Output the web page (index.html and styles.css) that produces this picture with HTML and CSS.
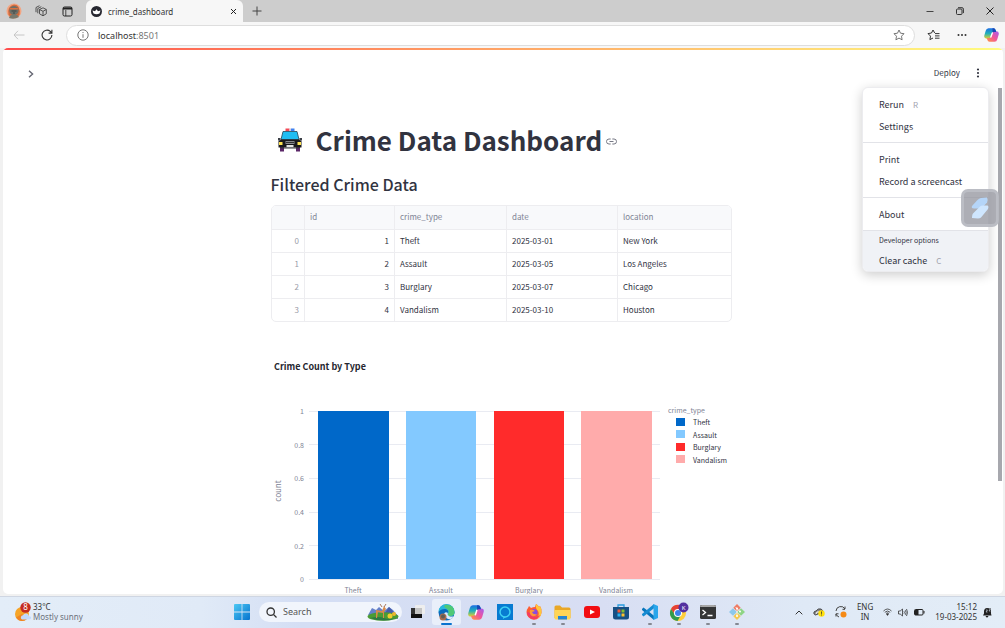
FILE: index.html
```html
<!DOCTYPE html>
<html lang="en">
<head>
    <meta charset="UTF-8">
    <title>crime_dashboard</title>
    <link rel="stylesheet" href="styles.css">
</head>
<body>
<div class="tabs">
    <button type="button" class="icon" aria-label="Profile">
      <svg width="16" height="16" viewBox="0 0 16 16"><circle cx="8" cy="8" r="7.5" fill="#f3a582"/><path d="M2.5 12Q1 3 8 1.5Q15 2 13.5 12L11 14H5Z" fill="#cf6a3d"/><circle cx="8" cy="7.5" r="4.6" fill="#6b6f68"/><path d="M4 5h8v1.500H4z" fill="#d9713e"/><path d="M3 15Q4 11 8 11.500Q12 11 13 14Q8 17 3 15" fill="#77786c"/><path d="M5.500 8h5M7 10h2" stroke="#3c4947"/></svg>
    </button>
    <button type="button" class="icon" aria-label="Workspaces">
      <svg width="12" height="12" viewBox="0 0 12 12" fill="none" stroke="#444" stroke-width=".9"><path d="M4.500 4.500L8 2.800L11.300 4.500V8.800L8 10.800L4.500 8.800ZM4.500 4.500L8 6.300L11.300 4.500M8 6.300V10.800M2.800 8.300V3.500L6.300 1.700M1 7.200V2.500L4.500 .7"/></svg>
    </button>
    <button type="button" class="icon" aria-label="Tab actions">
      <svg width="11" height="11" viewBox="0 0 11 11" fill="none" stroke="#222"><rect x="1" y="1" width="9" height="9" rx="1.500"/><path d="M1 2.500h9" stroke-width="2"/><path d="M3.800 4v6" stroke-width=".8"/></svg>
    </button>
    <div class="tab">
      <svg width="11" height="11" viewBox="0 0 11 11"><circle cx="5.500" cy="5.500" r="5.500" fill="#262730"/><path d="M1.500 4.500L4 5.200L5.500 3.300L7 5.200L9.500 4.500L8.500 7.500Q5.500 8.800 2.500 7.500Z" fill="#fff"/></svg>
      <span>crime_dashboard</span>
      <button type="button" aria-label="Close tab">
        <svg width="7" height="7" viewBox="0 0 7 7" stroke="#222" stroke-width="1"><path d="M1 1l5 5M6 1l-5 5"/></svg>
      </button>
    </div>
    <button type="button" class="icon" aria-label="New tab">
      <svg width="10" height="10" viewBox="0 0 10 10" stroke="#444"><path d="M5 .5v9M.5 5h9"/></svg>
    </button>
    <div class="window">
      <button type="button" aria-label="Minimize"><svg width="8" height="8" viewBox="0 0 8 8" stroke="#444"><path d="M.5 4.500h7"/></svg></button>
      <button type="button" aria-label="Restore"><svg width="8" height="8" viewBox="0 0 8 8" fill="none" stroke="#333"><rect x=".5" y="2" width="5.500" height="5.500" rx="1"/><path d="M2 .7h4q1.400 0 1.400 1.400v4"/></svg></button>
      <button type="button" aria-label="Close"><svg width="8" height="8" viewBox="0 0 8 8" stroke="#222"><path d="M.5.5l7 7M7.500.5l-7 7"/></svg></button>
    </div>
</div>

<div class="toolbar">
    <button type="button" class="icon" aria-label="Back">
      <svg width="12" height="10" viewBox="0 0 12 10" fill="none" stroke="#c6c6c6"><path d="M5 .8L1 5l4 4.200M1 5h10.500"/></svg>
    </button>
    <button type="button" class="icon" aria-label="Refresh">
      <svg width="12" height="12" viewBox="0 0 12 12" fill="none" stroke="#333" stroke-width="1.100"><path d="M10.900 6A4.900 4.900 0 1 1 9.300 2.400L10.800 4M10.900.8V4.100H7.600"/></svg>
    </button>
    <div class="address">
      <svg width="12" height="12" viewBox="0 0 12 12" fill="none" stroke="#666" stroke-width=".9"><circle cx="6" cy="6" r="5.200"/><path d="M6 5.200v3.600M6 3v1.100"/></svg>
      <a href="#">localhost<span>:8501</span></a>
      <button type="button" aria-label="Add to favorites">
        <svg width="12" height="12" viewBox="0 0 12 12" fill="none" stroke="#666" stroke-width=".9"><path d="M6 1l1.500 3.200 3.500.5-2.500 2.500.6 3.600L6 9.100l-3.100 1.700.6-3.600L1 4.700l3.500-.5z"/></svg>
      </button>
    </div>
    <button type="button" class="icon wide" aria-label="Favorites">
      <svg width="13" height="12" viewBox="0 0 13 12" fill="none" stroke="#333"><path d="M7.700 4L6 1 4.500 4 1 4.600l2.500 2.500-.6 3.500L6 9M8 4.600h4.500M8 6.900h4.500M8 9.200h4.500"/></svg>
    </button>
    <button type="button" class="icon wide" aria-label="More">
      <svg width="10" height="4" viewBox="0 0 10 4" fill="#333"><circle cx="1.500" cy="2" r="1"/><circle cx="5" cy="2" r="1"/><circle cx="8.500" cy="2" r="1"/></svg>
    </button>
    <button type="button" class="icon" aria-label="Copilot">
      <svg width="15" height="14" viewBox="0 0 15 14">
        <defs>
          <linearGradient id="cool" x1="0" y1="0" x2="0" y2="1"><stop offset="0" stop-color="#1b6fe4"/><stop offset=".5" stop-color="#22b0b8"/><stop offset="1" stop-color="#e3d12c"/></linearGradient>
          <linearGradient id="warm" x1="1" y1="0" x2="0" y2="1"><stop offset="0" stop-color="#a45cf0"/><stop offset=".5" stop-color="#f0549a"/><stop offset="1" stop-color="#ff983f"/></linearGradient>
        </defs>
        <g id="copilot"><path d="M4.500.3h5q1.700 0 2.200 2l.5 1.700H10Q8.600 4 8 5.500L6.700 9.300Q6.200 10.700 4.500 10.700H2.800Q-.4 10.700.3 7.500L1.700 2.800Q2.300.3 4.500.3" fill="url(#cool)"/><path d="M10.500 13.700h-5q-1.700 0-2.200-2L2.800 10H5q1.400 0 2-1.500l1.300-3.800q.5-1.400 2.200-1.400h1.700q3.200 0 2.500 3.200l-1.400 4.700q-.6 2.500-2.800 2.500" fill="url(#warm)"/><path d="M8.500.3h1q1.700 0 2.200 2l.5 1.700H10Q9 4 8.500 5Z" fill="#1747b5"/><path d="M8.300 5L6.900 9" stroke="#fff" stroke-width="1.400" stroke-linecap="round"/></g>
      </svg>
    </button>
</div>

<div class="page">
    <header>
      <button type="button" class="expand" aria-label="Open sidebar">
        <svg width="6" height="8" viewBox="0 0 6 8" fill="none" stroke="#666874" stroke-width="1.400"><path d="M1 .7L4.600 4 1 7.300"/></svg>
      </button>
      <button type="button" class="deploy">Deploy</button>
      <button type="button" class="dots" aria-label="Main menu">
        <svg width="4" height="10" viewBox="0 0 4 10" fill="#31333f"><circle cx="2" cy="1.500" r="1.100"/><circle cx="2" cy="5" r="1.100"/><circle cx="2" cy="8.500" r="1.100"/></svg>
      </button>
    </header>

    <main>
      <h1>
        <svg width="24" height="24" viewBox="0 0 24 24">
          <rect x="2" y="18" width="4" height="5.500" fill="#5b2768"/><rect x="18" y="18" width="4" height="5.500" fill="#5b2768"/>
          <rect x="7.500" y="0.500" width="4" height="2.500" fill="#f34a57"/><rect x="11.500" y="0.500" width="1.500" height="2.500" fill="#d9c6d8"/><rect x="13" y="0.500" width="3.500" height="2.500" fill="#3e82f0"/>
          <path d="M5 3.500h14L21 11.500H3Z" fill="#20bdf2" stroke="#244457" stroke-width=".8"/>
          <path d="M.5 13L3 11.500h18l2.500 1.500v6.500H.5Z" fill="#19181d"/>
          <path d="M0 10h2.500v2.500H0zM21.500 10H24v2.500h-2.500z" fill="#3c4048"/>
          <rect x="1" y="14" width="3.500" height="3" fill="#ffe452"/><rect x="19.500" y="14" width="3.500" height="3" fill="#ffe452"/>
          <rect x="7.500" y="13" width="9" height="3" fill="#88898f"/><path d="M8 14.500h8" stroke="#333"/><rect x="8.500" y="17" width="7" height="2.500" fill="#e5e5e5"/><path d="M3 20h18" stroke="#33323a"/>
        </svg>
        <span>Crime Data Dashboard</span>
        <a href="#crime-data-dashboard" aria-label="Link to heading">
          <svg width="11" height="7" viewBox="0 0 11 7" fill="none" stroke="#777985"><path d="M4.700 1H3a2.500 2.500 0 0 0 0 5h1.700M6.300 1H8a2.500 2.500 0 0 1 0 5H6.300M3.500 3.500h4"/></svg>
        </a>
      </h1>
      <h2>Filtered Crime Data</h2>
      <div class="table">
        <table>
          <colgroup><col class="index"><col class="id"><col class="type"><col class="date"><col></colgroup>
          <thead>
            <tr><th></th><th>id</th><th>crime_type</th><th>date</th><th>location</th></tr>
          </thead>
          <tbody>
            <tr><td>0</td><td>1</td><td>Theft</td><td>2025-03-01</td><td>New York</td></tr>
            <tr><td>1</td><td>2</td><td>Assault</td><td>2025-03-05</td><td>Los Angeles</td></tr>
            <tr><td>2</td><td>3</td><td>Burglary</td><td>2025-03-07</td><td>Chicago</td></tr>
            <tr><td>3</td><td>4</td><td>Vandalism</td><td>2025-03-10</td><td>Houston</td></tr>
          </tbody>
        </table>
      </div>

      <svg class="chart" viewBox="0 0 461 282">
        <text class="chart-title" x="3" y="26">Crime Count by Type</text>
        <path class="grid" d="M38 67.500h351M38 100.500h351M38 134.500h351M38 168.500h351M38 201.500h351M38 235.500h351"/>
        <g class="ticks">
          <text x="33" y="70">1</text>
          <text x="33" y="104">0.8</text>
          <text x="33" y="137">0.6</text>
          <text x="33" y="171">0.4</text>
          <text x="33" y="205">0.2</text>
          <text x="33" y="238">0</text>
        </g>
        <text class="axis" transform="translate(10 147) rotate(-90)">count</text>
        <rect x="47" y="67" width="71" height="168" fill="#0068c9"/>
        <rect x="135" y="67" width="70" height="168" fill="#83c9ff"/>
        <rect x="223" y="67" width="70" height="168" fill="#ff2b2b"/>
        <rect x="310" y="67" width="71" height="168" fill="#ffabab"/>
        <g class="names">
          <text x="82" y="249">Theft</text>
          <text x="170" y="249">Assault</text>
          <text x="258" y="249">Burglary</text>
          <text x="345" y="249">Vandalism</text>
        </g>
        <text class="legend-title" x="397" y="69">crime_type</text>
        <g class="legend">
          <rect x="405" y="74" width="9" height="8" fill="#0068c9"/><text x="422" y="81">Theft</text>
          <rect x="405" y="86" width="9" height="8" fill="#83c9ff"/><text x="422" y="94">Assault</text>
          <rect x="405" y="99" width="9" height="8" fill="#ff2b2b"/><text x="422" y="106">Burglary</text>
          <rect x="405" y="111" width="9" height="8" fill="#ffabab"/><text x="422" y="119">Vandalism</text>
        </g>
      </svg>
    </main>

    <div class="menu">
      <div class="group">
        <button type="button">Rerun <kbd>R</kbd></button>
        <button type="button">Settings</button>
      </div>
      <div class="group">
        <button type="button">Print</button>
        <button type="button">Record a screencast</button>
      </div>
      <div class="group">
        <button type="button">About</button>
      </div>
      <div class="group developer">
        <p>Developer options</p>
        <button type="button">Clear cache <kbd>C</kbd></button>
      </div>
    </div>
    <div class="scrollbar"></div>
    <button type="button" class="floating" aria-label="Assistant">
      <svg width="18" height="24" viewBox="0 0 18 24"><path d="M1 10Q0 12.500 3 12.500h6q1.500 0 2.500-1L16 6.500Q17 3 16 1.500L10 2Q8 2.500 6.500 4Z" fill="#b5d5f8"/><path d="M1 22Q1 18 2.500 17L9 10.500Q10 9.500 12 9.500h4.500Q18 10 17 13L10 21.500Q9 22.500 7 22.500Z" fill="#cfe6fe"/></svg>
    </button>
</div>

<footer>
    <div class="weather">
      <svg width="18" height="20" viewBox="0 0 18 20"><circle cx="8" cy="12" r="7" fill="#f6a427"/><path d="M2 15.500A7 7 0 0 0 13 17L8 12Z" fill="#ef8422"/><path d="M8 17.500a2.300 2.300 0 0 1 1-4.300 3.200 3.200 0 0 1 6 1q2.500 0 2 2-.5 1.300-2 1.300z" fill="#c2d9fb"/><circle cx="11.500" cy="5.500" r="5.200" fill="#c52b20"/><text x="11.500" y="8" class="count">8</text></svg>
      <p>33°C<br><span>Mostly sunny</span></p>
    </div>
    <div class="apps">
      <button type="button" aria-label="Start">
        <svg width="16" height="16" viewBox="0 0 16 16"><defs><linearGradient id="win" x2="1" y2="1"><stop stop-color="#4cc8f4"/><stop offset="1" stop-color="#0673ce"/></linearGradient></defs><path d="M0 1q0-1 1-1h6.600v7.600H0zM8.400 0H15q1 0 1 1v6.600H8.400zM0 8.400h7.600V16H1q-1 0-1-1zM8.400 8.400H16V15q0 1-1 1H8.400z" fill="url(#win)"/></svg>
      </button>
      <label class="search">
        <svg width="11" height="11" viewBox="0 0 11 11" fill="none" stroke="#333" stroke-width="1.300"><circle cx="4.700" cy="4.700" r="3.700"/><path d="M7.500 7.500l3 3"/></svg>
        <input type="text" placeholder="Search" aria-label="Search">
        <svg width="32" height="17" viewBox="0 0 32 17"><path d="M1 11L5 4l4 2 3-3 5 4 5-4 4 3 5 6v3z" fill="#6581c9"/><path d="M18 9l4-6 3 3 5 7z" fill="#475da9"/><ellipse cx="16" cy="12.500" rx="15.500" ry="4.300" fill="#4b9b34"/><path d="M3 14Q12 12 17 14T29 14Q18 19 3 14" fill="#2e7945"/><path d="M9 6l6 1 2-5 2 3-2 3v6h-1v-5l-5-1-1 6H9z" fill="#d98a4c"/><path d="M15 3l-2-3M17 3l2-3" stroke="#9b5733" stroke-width=".8"/><circle cx="23" cy="12" r="2.500" fill="#f2cd31"/><circle cx="27" cy="10" r="2" fill="#edb72c"/></svg>
      </label>
      <button type="button" aria-label="Task view">
        <svg width="16" height="16" viewBox="0 0 16 16"><path d="M1 4h11v10H1z" fill="#333"/><path d="M1 10h11v4H1z" fill="#111"/><rect x="5" y="1" width="10" height="9" rx="1" fill="#eee"/><path d="M5 4h7v6H5z" fill="#c4c4c4"/></svg>
      </button>
      <button type="button" class="active" aria-label="Edge">
        <svg width="17" height="17" viewBox="0 0 17 17"><circle cx="8.500" cy="8.500" r="8" fill="#0b6cbd"/><path d="M.5 8A8 8 0 0 1 16.500 8q0 4-4 4-3 0-3-1.500Q12 6 7.500 5 3 4.500.5 8" fill="#27b7db"/><path d="M7 .7Q16 0 16.500 8q0 4-4 4-3 0-3-1.500 3-3-1-6Q5 3 7 .7" fill="#50c977"/><path d="M9.500 10q.5 3 6 2.500-1 2-3 3Q7 15 6 10q1-3 4-1z" fill="#dceafa"/><circle cx="5" cy="13" r="3.500" fill="#a56b50"/><circle cx="5" cy="12.500" r="2" fill="#5e5d57"/></svg>
      </button>
      <button type="button" aria-label="Copilot"><svg width="16" height="15" viewBox="0 0 15 14"><use href="#copilot"/></svg></button>
      <button type="button" aria-label="Alexa">
        <svg width="16" height="16" viewBox="0 0 16 16"><path d="M0 0h16v16H0z" fill="#087bd1"/><circle cx="8" cy="8" r="5" fill="none" stroke="#40d2f4" stroke-width="1.500"/><path d="M6.500 12.500L6 15l3-2" fill="#40d2f4"/></svg>
      </button>
      <button type="button" class="open" aria-label="Firefox">
        <svg width="16" height="16" viewBox="0 0 16 16"><path d="M2 4l1-2 2 2q2-1 4-1l1-3q2 1 3 3l1-1q2 3 1.500 6.500A7.500 7.500 0 0 1 .5 8Q.5 5.500 2 4" fill="#ff5c32"/><path d="M10 0q2 1 3 3l1-1q2 3 1.500 6.500Q15 13 11 15q3-5 1-8-3-3-2-7" fill="#ffc63b"/><path d="M1 8q0 5 5 7 6 1 8-4-6 5-9-2z" fill="#f33c65"/><circle cx="8" cy="8.500" r="3.500" fill="#8a4bdd"/><path d="M4 6q3-1 5 1l-3 1q1 3 5 2-2 3-5 2-3-2-2-6" fill="#ff9933"/></svg>
      </button>
      <button type="button" class="open" aria-label="File Explorer">
        <svg width="17" height="15" viewBox="0 0 17 15"><path d="M.5 2Q.5.5 2 .5h4l2 2h7q1.500 0 1.500 1.500v9H.5z" fill="#e9a727"/><path d="M.5 5h16v8q0 1.500-1.500 1.500H2Q.5 14.500.5 13z" fill="#ffd556"/><path d="M4 11h9v3.500H4z" fill="#2685d2"/></svg>
      </button>
      <button type="button" aria-label="YouTube">
        <svg width="16" height="12" viewBox="0 0 16 12"><rect width="16" height="12" rx="3" fill="#f20d12"/><path d="M6 3.500l5 2.500-5 2.500z" fill="#fff"/></svg>
      </button>
      <button type="button" aria-label="Microsoft Store">
        <svg width="16" height="16" viewBox="0 0 16 16"><path d="M5 4V1h6v3" fill="none" stroke="#299cdf" stroke-width="1.300"/><path d="M0 3h16v10q0 2.500-2.500 2.500h-11Q0 15.500 0 13z" fill="#174f83"/><path d="M4.500 5.500h3v3h-3z" fill="#f15b36"/><path d="M8.500 5.500h3v3h-3z" fill="#83bd31"/><path d="M4.500 9.500h3v3h-3z" fill="#29b4ef"/><path d="M8.500 9.500h3v3h-3z" fill="#fcc12d"/></svg>
      </button>
      <button type="button" class="open" aria-label="Visual Studio Code">
        <svg width="16" height="16" viewBox="0 0 16 16"><path d="M0 5l1.500-1.500L12 11.700V16L0 6z" fill="#0875bb"/><path d="M0 11l1.500 1.500L12 4.300V0L0 10z" fill="#168bd2"/><path d="M11.500 0L16 2v12l-4.500 2z" fill="#2aa6eb"/></svg>
      </button>
      <button type="button" class="open" aria-label="Chrome">
        <svg width="20" height="20" viewBox="0 0 20 20"><circle cx="9" cy="11" r="8" fill="#ffce3a"/><path d="M2 7A8 8 0 0 1 16 7H9l-3 6z" fill="#e64134"/><path d="M2 7A8 8 0 0 0 8.500 19L12 13H6z" fill="#319b4c"/><circle cx="9" cy="11" r="4" fill="#fff"/><circle cx="9" cy="11" r="3" fill="#3b82e9"/><circle cx="14.500" cy="5.500" r="5" fill="#5330a0"/><text class="badge" x="14.500" y="8">K</text></svg>
      </button>
      <button type="button" class="open" aria-label="Terminal">
        <svg width="16" height="14" viewBox="0 0 16 14"><rect width="16" height="14" rx="1.500" fill="#343536"/><path d="M0 2q0-2 2-2h12q2 0 2 2z" fill="#a7a7a7"/><path d="M2.500 5l3 2.500-3 2.500M7.500 10.500h5" fill="none" stroke="#fff" stroke-width="1.300"/></svg>
      </button>
      <button type="button" class="open" aria-label="Git">
        <svg width="16" height="16" viewBox="0 0 16 16"><path d="M8 0l3.700 3.700L8 7.400 4.300 3.700z" fill="#ef7c64"/><path d="M4 4.200L7.800 8 4 11.800 0 8z" fill="#8cc8ec"/><path d="M12 4.200L16 8l-4 3.800L8.200 8z" fill="#8fd586"/><path d="M8 8.600l3.700 3.700L8 16l-3.700-3.700z" fill="#f3c951"/><path d="M6.500 3l4.500 4.500M8 4.500V12" stroke="#fff" stroke-width=".7"/><circle cx="8" cy="4.500" r="1" fill="#fff"/><circle cx="11" cy="7.500" r="1" fill="#fff"/><circle cx="8" cy="12" r="1" fill="#fff"/></svg>
      </button>
    </div>
    <div class="tray">
      <svg width="8" height="5" viewBox="0 0 8 5" fill="none" stroke="#333"><path d="M.7 4.300L4 1l3.300 3.300"/></svg>
      <svg width="12" height="10" viewBox="0 0 12 10"><path d="M2.500 8Q0 7 1 5q1-1 2-1 2-3 5-2 2 1 2 3z" fill="#888" stroke="#333" stroke-width=".8"/><path d="M3 7q0-3 4-2" fill="none" stroke="#fff"/><circle cx="8.500" cy="6.500" r="3.200" fill="#ffe00b"/><path d="M8.500 4.500v2.400M8.500 7.500v1" stroke="#333" stroke-width=".8"/></svg>
      <svg width="12" height="12" viewBox="0 0 12 12"><path d="M1 5a4.800 4.800 0 0 1 9-2V.5M10 3.300H7.500M.8 8q1 2 3.200 3M1 10.500V7.800h2.500" fill="none" stroke="#444"/><circle cx="8.500" cy="8.500" r="3" fill="#f58a16"/></svg>
      <p class="lang">ENG<br>IN</p>
      <div class="status">
        <svg width="9" height="8" viewBox="0 0 9 8" fill="none" stroke="#333" stroke-width=".8"><path d="M.5 3q4-4 8 0M1.800 4.300q2.700-2.600 5.400 0M3 5.500q1.500-1.400 3 0"/><circle cx="4.500" cy="6.500" r=".7" fill="#333"/></svg>
        <svg width="10" height="9" viewBox="0 0 10 9" fill="none" stroke="#333" stroke-width=".8"><path d="M.5 3h1.700L4.500 1v7L2.200 6H.5zM6 3.300q.8 1.200 0 2.400M7.300 2.200q1.700 2.300 0 4.600M8.500 1q2 3.500 0 7"/></svg>
        <svg width="11" height="8" viewBox="0 0 11 8"><rect x=".5" y="1.500" width="8.500" height="5.500" rx="1" fill="none" stroke="#222"/><path d="M1 2h3.500v5H1zM9.500 3h1v2.500h-1z" fill="#222"/></svg>
      </div>
      <p class="clock">15:12<br>19-03-2025</p>
      <svg width="10" height="11" viewBox="0 0 10 11"><path d="M1 8.500l1-2V4q.5-3 3-3l4 .5v5l.5 2z" fill="#222"/><path d="M3.500 9q1.500 3 3 0" fill="#222"/><path d="M4 3h1.500L4 5h1.500M7 2h1.500L7 4h1.500" stroke="#dce7f5" stroke-width=".6" fill="none"/></svg>
    </div>
</footer>
</body>
</html>
```
FILE: styles.css
```css
* {
  box-sizing: border-box;
}

body {
  display: flex;
  flex-direction: column;
  height: 100vh;
  margin: 0;
  overflow: hidden;
  background-color: #f1f1f1;
  font-family: "Noto Sans", sans-serif;
  font-size: 8px;
  color: #333;
}

button {
  display: flex;
  align-items: center;
  justify-content: center;
  padding: 0;
  border: none;
  background: none;
  font: inherit;
  color: inherit;
}

p, h1, h2 {
  margin: 0;
}

svg {
  display: block;
  flex-shrink: 0;
}

a {
  color: inherit;
  text-decoration: none;
}

/* browser */
.tabs {
  display: flex;
  align-items: center;
  flex-shrink: 0;
  height: 22px;
  background-color: #cdcdcd;
}

.icon {
  width: 27px;
  height: 22px;
}

.tab {
  display: flex;
  align-items: center;
  gap: 6px;
  width: 157px;
  height: 22px;
  margin-left: 5px;
  padding: 0 6px 0 5px;
  border-radius: 6px 6px 0 0;
  background-color: #f7f7f7;
}

.tab button {
  margin-left: auto;
}

.window {
  display: flex;
  margin-left: auto;
}

.window button {
  width: 30px;
  height: 22px;
}

.toolbar {
  display: flex;
  align-items: center;
  flex-shrink: 0;
  height: 26px;
  padding-left: 5px;
  background-color: #f7f7f7;
}

.toolbar .icon {
  width: 28px;
}

.toolbar .wide {
  margin-right: 1px;
}

.address {
  display: flex;
  align-items: center;
  flex: 1;
  gap: 9px;
  height: 21px;
  margin: 0 4px 0 5px;
  padding: 0 9px 0 10px;
  border: 1px solid #dedede;
  border-radius: 11px;
  background-color: #fff;
  font-size: 9px;
}

.address span {
  color: #777;
}

.address button {
  margin-left: auto;
}

/* app */
.page {
  position: relative;
  flex: 1;
  min-height: 0;
  margin: 0 2px 2px 3px;
  padding-right: 4px;
  overflow: hidden;
  border-radius: 5px;
  background-color: #fff;
  font-family: "Noto Sans CJK SC", "Open Sans", sans-serif;
  font-size: 9px;
  color: #31333f;
}

.page::before {
  content: "";
  display: block;
  height: 2px;
  margin-right: -4px;
  background: linear-gradient(to right, #ff4b4b, #fffd80);
}

header {
  display: flex;
  align-items: center;
  height: 45px;
  padding: 0 19px 0 25px;
}

.expand {
  padding-top: 3px;
}

.deploy {
  margin-left: auto;
  font-size: 8px;
}

.dots {
  margin-left: 16px;
}

main {
  max-width: 461px;
  margin: 0 auto;
  padding-top: 27px;
}

h1 {
  display: flex;
  align-items: center;
  height: 36px;
  padding-left: 7px;
  font-size: 26px;
  line-height: 36px;
}

h1 span {
  margin: 0 4px 0 14px;
}

h1 a {
  padding-top: 2px;
}

h2 {
  margin: 13px 0 8px;
  font-size: 16px;
  font-weight: 500;
  line-height: 26px;
}

.table {
  overflow: hidden;
  border: 1px solid #ededf0;
  border-radius: 5px;
}

table {
  width: 100%;
  table-layout: fixed;
  border-collapse: collapse;
  font-size: 8px;
}

.index {
  width: 33px;
}

.id {
  width: 90px;
}

.type {
  width: 112px;
}

.date {
  width: 111px;
}

th, td {
  height: 23px;
  padding: 0 5px;
  border-right: 1px solid #ededf0;
  border-bottom: 1px solid #ededf0;
  line-height: 12px;
  text-align: left;
}

th {
  background-color: #f8f9fb;
  font-weight: 400;
  color: #808495;
}

td:nth-child(-n+2) {
  text-align: right;
}

td:first-child {
  color: #9a9ca8;
}

th:last-child, td:last-child {
  border-right: none;
}

tr:last-child td {
  border-bottom: none;
}

.chart {
  width: 100%;
  margin-top: 22px;
  font-size: 7px;
  fill: #808495;
}

.chart-title {
  font-size: 9px;
  font-weight: 700;
  fill: #262730;
}

.grid {
  stroke: #e9ebf2;
}

.ticks {
  text-anchor: end;
}

.names, .axis {
  text-anchor: middle;
}

.axis {
  font-size: 8px;
}

.legend {
  fill: #31333f;
}

.menu {
  position: absolute;
  top: 39px;
  right: 14px;
  width: 127px;
  overflow: hidden;
  border: 1px solid #ececef;
  border-radius: 6px;
  background-color: #fff;
  box-shadow: 0 3px 12px rgba(0, 0, 0, 0.2);
}

.group {
  padding: 5px 0;
  border-bottom: 1px solid #e2e3e8;
}

.group button {
  justify-content: flex-start;
  width: 100%;
  height: 22px;
  padding: 0 16px;
}

.developer {
  padding: 0;
  border: none;
  background-color: #f0f2f6;
}

.developer p {
  padding: 0 16px;
  font-size: 7px;
  line-height: 18px;
}

kbd {
  margin-left: 9px;
  font: inherit;
  font-size: 8px;
  color: #a0a2ad;
}

.scrollbar {
  position: absolute;
  top: 40px;
  right: 1px;
  width: 4px;
  height: 72%;
  background-color: #a7a8ae;
}

.floating {
  position: absolute;
  top: 141px;
  right: 4px;
  width: 38px;
  height: 38px;
  border: 3px solid rgba(190, 192, 200, 0.8);
  border-radius: 7px;
  background-color: rgba(145, 147, 156, 0.75);
}

/* taskbar */
footer {
  display: grid;
  grid-template-columns: 227px auto 1fr;
  align-items: center;
  flex-shrink: 0;
  height: 32px;
  padding-bottom: 1px;
  border-top: 1px solid #cfd6e2;
  background: linear-gradient(to right, #e3edf8, #e0eaf7 20%, #d4def4 30%, #d8def3 60%, #dfe9f6 80%, #e3edf7);
  line-height: 10px;
}

.weather {
  display: flex;
  gap: 1px;
  padding-left: 14px;
}

.weather span {
  color: #6c717b;
}

.count, .badge {
  font-size: 8px;
  text-anchor: middle;
  fill: #fff;
}

.badge {
  font-size: 6px;
}

.apps {
  display: flex;
  align-items: center;
}

.apps button {
  position: relative;
  width: 29px;
  height: 26px;
}

.apps .active {
  border-radius: 3px;
  background-color: #e9effa;
}

.open::after, .active::after {
  content: "";
  position: absolute;
  bottom: 0;
  width: 4px;
  height: 2px;
  border-radius: 1px;
  background-color: #858892;
}

.active::after {
  width: 11px;
  background-color: #0873cf;
}

.search {
  display: flex;
  align-items: center;
  gap: 6px;
  width: 143px;
  height: 20px;
  margin: 0 1px 0 3px;
  padding: 0 3px 0 7px;
  border-radius: 10px;
  background-color: #f1f5fc;
}

.search input {
  flex: 1;
  min-width: 0;
  padding: 0;
  border: none;
  outline: none;
  background: none;
  font: inherit;
  font-size: 9px;
}

.search input::placeholder {
  color: #555;
}

.tray {
  display: flex;
  align-items: center;
  justify-content: flex-end;
  gap: 10px;
  padding-right: 13px;
}

.lang {
  text-align: center;
}

.status {
  display: flex;
  align-items: center;
  gap: 6px;
}

.clock {
  text-align: right;
}

.tray .clock + svg {
  margin-left: -5px;
}
```
